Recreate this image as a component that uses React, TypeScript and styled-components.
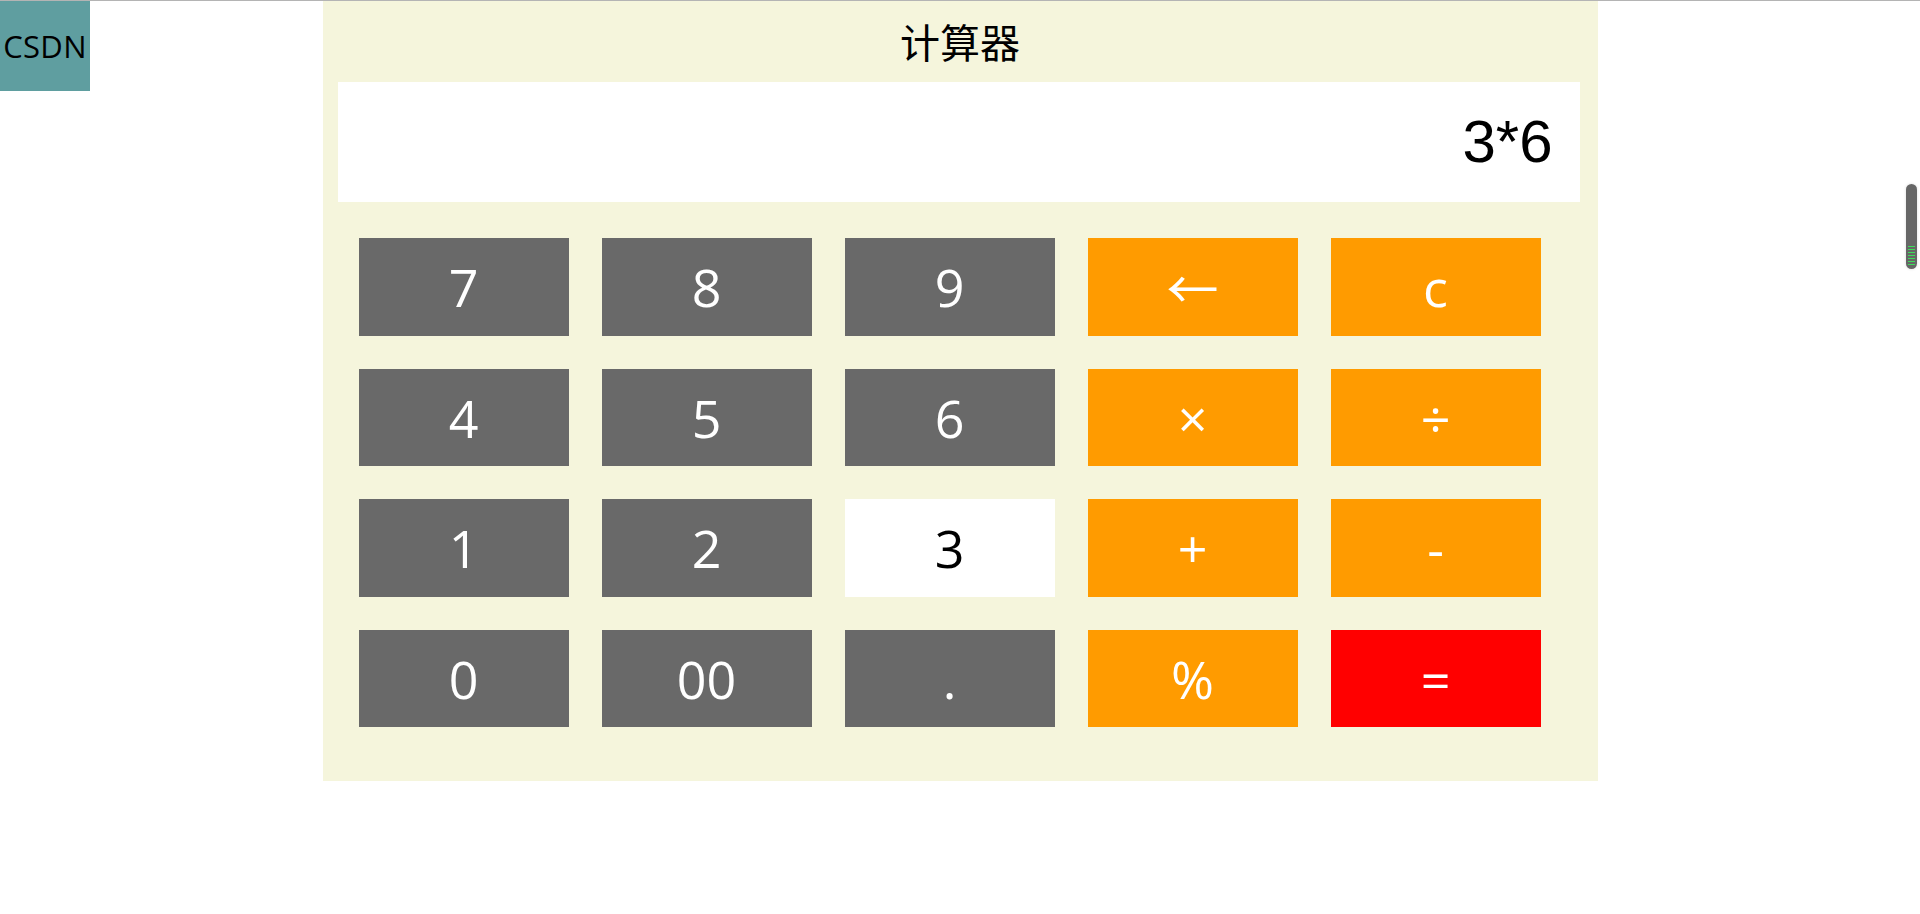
import React from 'react'
import styled, { createGlobalStyle } from 'styled-components'

type Tone = 'num' | 'op' | 'eq' | 'pressed'

const GlobalStyle = createGlobalStyle`
  html,
  body {
    margin: 0;
    padding: 0;
    background: #fff;
  }

  body {
    font-family: 'Open Sans', 'Noto Sans CJK SC', sans-serif;
  }
`

const Page = styled.div`
  display: grid;
  grid-template-columns: 1fr 1275px 1fr;
  align-items: start;
  min-height: 913px;
  border-top: 1px solid #b4b4b4;
`

const Badge = styled.div`
  display: flex;
  align-items: center;
  justify-content: center;
  width: 90px;
  height: 90px;
  background: #5f9ea0;
  color: #000;
  font-size: 31px;
  letter-spacing: 0.3px;
`

const Calculator = styled.div`
  background: #f5f5dc;
  padding: 0 15px 54px;
`

const Title = styled.div`
  height: 81px;
  line-height: 81px;
  text-align: center;
  font-family: 'Noto Sans CJK SC', sans-serif;
  font-size: 40px;
  color: #000;
`

const Screen = styled.div`
  box-sizing: border-box;
  width: 1242px;
  height: 120px;
  padding-right: 27px;
  background: #fff;
  color: #000;
  text-align: right;
  font-family: 'Liberation Sans', Arial, sans-serif;
  font-size: 60px;
  line-height: 120px;
`

const Keypad = styled.div`
  display: grid;
  grid-template-columns: repeat(5, 210px);
  grid-auto-rows: 97.5px;
  column-gap: 33px;
  row-gap: 33px;
  margin: 36px 0 0 21px;
`

const toneColors: Record<Tone, { bg: string; fg: string }> = {
  num: { bg: '#696969', fg: '#fff' },
  op: { bg: '#ff9b00', fg: '#fff' },
  eq: { bg: '#ff0000', fg: '#fff' },
  pressed: { bg: '#fff', fg: '#000' }
}

const Key = styled.button<{ $tone: Tone }>`
  display: flex;
  align-items: center;
  justify-content: center;
  padding: 0;
  border: none;
  background: ${({ $tone }) => toneColors[$tone].bg};
  color: ${({ $tone }) => toneColors[$tone].fg};
  font-family: 'Open Sans', 'Noto Sans CJK SC', sans-serif;
  font-size: 52px;
  cursor: pointer;
`

const ScrollHandle = styled.div`
  position: fixed;
  top: 184px;
  right: 3px;
  width: 11px;
  height: 85px;
  border-radius: 6px;
  background: #666;
  box-shadow: 0 0 3px rgba(0, 0, 0, 0.15);
  overflow: hidden;

  &::after {
    content: '';
    position: absolute;
    left: 2px;
    right: 2px;
    bottom: 3px;
    height: 20px;
    background: repeating-linear-gradient(
      to bottom,
      #3ddc5a 0,
      #3ddc5a 1px,
      transparent 1px,
      transparent 3px
    );
  }
`

const keys: { label: string; tone: Tone }[] = [
  { label: '7', tone: 'num' },
  { label: '8', tone: 'num' },
  { label: '9', tone: 'num' },
  { label: '←', tone: 'op' },
  { label: 'c', tone: 'op' },
  { label: '4', tone: 'num' },
  { label: '5', tone: 'num' },
  { label: '6', tone: 'num' },
  { label: '×', tone: 'op' },
  { label: '÷', tone: 'op' },
  { label: '1', tone: 'num' },
  { label: '2', tone: 'num' },
  { label: '3', tone: 'pressed' },
  { label: '+', tone: 'op' },
  { label: '-', tone: 'op' },
  { label: '0', tone: 'num' },
  { label: '00', tone: 'num' },
  { label: '.', tone: 'num' },
  { label: '%', tone: 'op' },
  { label: '=', tone: 'eq' }
]

export default function App() {
  return (
    <>
      <GlobalStyle />
      <Page>
        <Badge>CSDN</Badge>
        <Calculator>
          <Title>计算器</Title>
          <Screen>3*6</Screen>
          <Keypad>
            {keys.map((k) => (
              <Key key={k.label} $tone={k.tone}>
                {k.label}
              </Key>
            ))}
          </Keypad>
        </Calculator>
      </Page>
      <ScrollHandle />
    </>
  )
}
